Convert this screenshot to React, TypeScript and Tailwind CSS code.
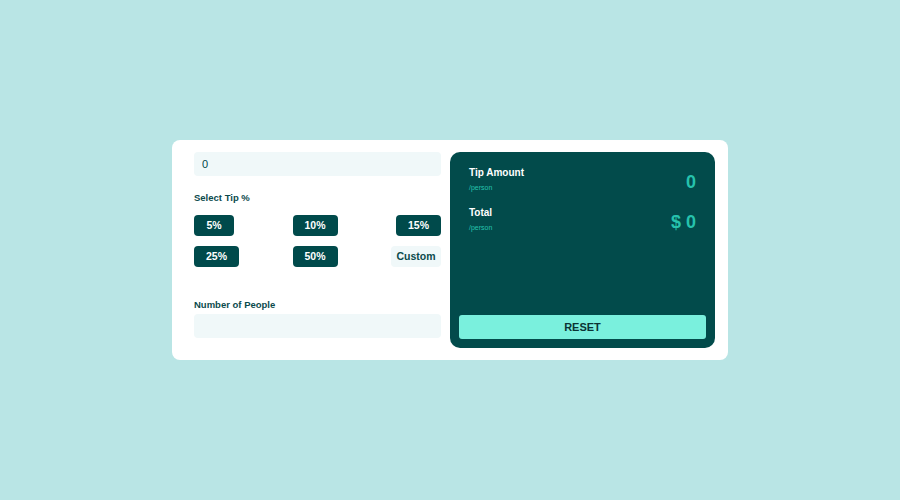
import { useState } from 'react'

export default function App() {
  const [bill, setBill] = useState('0')
  const [people, setPeople] = useState('')

  return (
    <div
      className="flex h-[500px] w-full items-center justify-center bg-[#b9e5e5]"
      style={{ fontFamily: '"Liberation Sans", Arial, sans-serif' }}
    >
      <div className="flex h-[220px] w-[556px] gap-[9px] rounded-lg bg-white py-3 pl-[22px] pr-[13px]">
        {/* left side: inputs */}
        <div className="flex w-[247px] flex-col">
          <input
            value={bill}
            onChange={(e) => setBill(e.target.value)}
            className="h-6 w-full rounded bg-[#f0f8f9] px-2 text-[11px] text-[#00474b] outline-none"
          />
          <div className="mt-[15px] h-[14px] text-[9.5px] font-bold leading-[14px] text-[#0b4a4c]">Select Tip %</div>
          <div className="mt-[10px] flex justify-between">
            <button className="h-[21px] w-10 rounded bg-[#004a4b] text-[10.5px] font-bold text-white">5%</button>
            <button className="h-[21px] w-[45px] rounded bg-[#004a4b] text-[10.5px] font-bold text-white">10%</button>
            <button className="h-[21px] w-[45px] rounded bg-[#004a4b] text-[10.5px] font-bold text-white">15%</button>
          </div>
          <div className="mt-[10px] flex justify-between">
            <button className="h-[21px] w-[45px] rounded bg-[#004a4b] text-[10.5px] font-bold text-white">25%</button>
            <button className="h-[21px] w-[45px] rounded bg-[#004a4b] text-[10.5px] font-bold text-white">50%</button>
            <button className="h-[21px] w-[50px] rounded bg-[#f0f8f9] text-[10.5px] font-bold text-[#0b4a4c]">Custom</button>
          </div>
          <div className="mt-[31px] h-[14px] text-[9.5px] font-bold leading-[14px] text-[#0b4a4c]">Number of People</div>
          <input
            value={people}
            onChange={(e) => setPeople(e.target.value)}
            className="mt-[2px] h-6 w-full rounded bg-[#f0f8f9] px-2 text-[11px] text-[#00474b] outline-none"
          />
        </div>

        {/* right side: results */}
        <div className="flex flex-1 flex-col rounded-[10px] bg-[#024b4b] px-[9px] pb-[9px] pt-[14px]">
          <div className="flex items-center justify-between px-[10px]">
            <div className="flex flex-col">
              <span className="text-[10px] font-bold leading-[14px] text-white">Tip Amount</span>
              <span className="mt-[3px] text-[7px] leading-[9px] text-[#26c2ad]">/person</span>
            </div>
            <span className="pt-[5px] text-[18px] font-bold leading-none text-[#26c2ad]">0</span>
          </div>
          <div className="mt-[14px] flex items-center justify-between px-[10px]">
            <div className="flex flex-col">
              <span className="text-[10px] font-bold leading-[14px] text-white">Total</span>
              <span className="mt-[3px] text-[7px] leading-[9px] text-[#26c2ad]">/person</span>
            </div>
            <span className="pt-[5px] text-[18px] font-bold leading-none text-[#26c2ad]">$ 0</span>
          </div>
          <button className="mt-auto h-6 w-full rounded-[3px] bg-[#7af0dd] text-[11px] font-bold text-[#0b3434]">
            RESET
          </button>
        </div>
      </div>
    </div>
  )
}
